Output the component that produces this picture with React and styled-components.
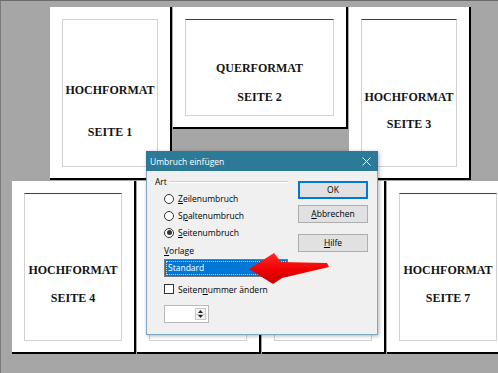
import React from 'react';
import styled, { createGlobalStyle } from 'styled-components';

const GlobalStyle = createGlobalStyle`
    html, body {
        margin: 0;
        padding: 0;
        background: #a6a6a6;
    }
    * {
        box-sizing: border-box;
    }
`;

const Canvas = styled.div`
    position: relative;
    width: 498px;
    height: 373px;
    overflow: hidden;
    background: #a6a6a6;
    border-top: 1px solid #6a6a6a;
    border-left: 1px solid #7a7a7a;
    padding-top: 6px;
`;

const PageRow = styled.div`
    display: flex;
    align-items: flex-start;
    gap: 1px;
    margin-left: ${p => p.$left}px;
    margin-top: ${p => p.$top || 0}px;
    width: max-content;
`;

const Page = styled.div`
    flex: none;
    width: ${p => p.$w}px;
    height: ${p => p.$h}px;
    background: #fff;
    border-right: 2px solid #000;
    border-bottom: 2px solid #000;
    padding: 12px 12px 11px 12px;
`;

const Margin = styled.div`
    height: 100%;
    border: 1px solid #d2d2d2;
    border-top-color: ${p => (p.$navy ? '#3a3a6a' : '#d2d2d2')};
    display: flex;
    flex-direction: column;
    align-items: center;
    padding-top: ${p => p.$pt}px;
    gap: ${p => p.$gap}px;
`;

const PageText = styled.div`
    font-family: 'Liberation Serif', 'Times New Roman', serif;
    font-weight: bold;
    font-size: 12px;
    line-height: 14px;
    color: #141414;
    white-space: nowrap;
`;

const Dialog = styled.div`
    position: absolute;
    left: 145px;
    top: 150px;
    width: 232px;
    height: 184px;
    background: #f0f0f0;
    border: 1px solid #7fa9c2;
    border-top: none;
    font-family: 'Open Sans', 'Segoe UI', sans-serif;
    font-size: 8.5px;
    color: #000;
    box-shadow: 1px 1px 4px rgba(0, 0, 0, 0.3);
`;

const TitleBar = styled.div`
    height: 20px;
    margin: 0 -1px;
    background: #2d7a98;
    color: #fff;
    display: flex;
    align-items: center;
    justify-content: space-between;
    padding: 0 7px 0 4px;
    font-size: 8.5px;
`;

const Body = styled.div`
    display: flex;
    padding: 4px 9px 0 8px;
`;

const LeftCol = styled.div`
    width: 133px;
    display: flex;
    flex-direction: column;
`;

const RightCol = styled.div`
    margin-left: 10px;
    padding-top: 6px;
    width: 70px;
    display: flex;
    flex-direction: column;
`;

const Legend = styled.div`
    height: 14px;
    display: flex;
    align-items: center;
    gap: 2px;
    line-height: 14px;
`;

const Rule = styled.div`
    flex: 1;
    height: 1px;
    background: #cfcfcf;
    border-bottom: 1px solid #fff;
    box-sizing: content-box;
`;

const OptionRow = styled.div`
    height: 17px;
    margin-left: 9px;
    display: flex;
    align-items: center;
    gap: 4px;
    margin-top: ${p => p.$mt || 0}px;
`;

const Radio = styled.span`
    flex: none;
    width: 10px;
    height: 10px;
    border-radius: 50%;
    border: 1px solid #333;
    background: #fff;
    display: flex;
    align-items: center;
    justify-content: center;
    &::after {
        content: '';
        width: 5px;
        height: 5px;
        border-radius: 50%;
        background: ${p => (p.$on ? '#333' : 'transparent')};
    }
`;

const Check = styled.span`
    flex: none;
    width: 10px;
    height: 10px;
    border: 1px solid #333;
    background: #fff;
`;

const Label = styled.div`
    margin-left: 9px;
    margin-top: ${p => p.$mt || 0}px;
    height: 14px;
    line-height: 14px;
`;

const Key = styled.span`
    text-decoration: underline;
    text-underline-offset: 1px;
`;

const Listbox = styled.div`
    margin-left: 9px;
    margin-top: 1px;
    width: 124px;
    height: 18px;
    border: 1px solid #7a7a7a;
    background: #0078d7;
    padding: 1px;
`;

const Selection = styled.div`
    height: 100%;
    border: 1px dotted #bcd8f2;
    color: #fff;
    line-height: 12px;
    padding-left: 1px;
`;

const CheckRow = styled.div`
    margin-left: 9px;
    margin-top: 5px;
    height: 14px;
    display: flex;
    align-items: center;
    gap: 4px;
`;

const Spin = styled.div`
    margin-left: 9px;
    margin-top: 9px;
    width: 45px;
    height: 18px;
    border: 1px solid #b8b8b8;
    background: #fff;
    display: flex;
    justify-content: flex-end;
    padding: 2px;
`;

const SpinButtons = styled.div`
    width: 11px;
    display: flex;
    flex-direction: column;
    border: 1px solid #c8c8c8;
    background: #f4f4f4;
`;

const SpinHalf = styled.div`
    flex: 1;
    display: flex;
    align-items: center;
    justify-content: center;
    & + & {
        border-top: 1px solid #c8c8c8;
    }
`;

const Button = styled.div`
    height: 18px;
    margin-top: ${p => p.$mt || 0}px;
    background: #e1e1e1;
    border: 1px solid ${p => (p.$default ? '#0078d7' : '#adadad')};
    box-shadow: ${p => (p.$default ? 'inset 0 0 0 1px #0078d7' : 'none')};
    display: flex;
    align-items: center;
    justify-content: center;
    line-height: 14px;
`;

const Arrow = styled.svg`
    position: absolute;
    left: 240px;
    top: 248px;
`;

const CloseIcon = () => (
    <svg width="9" height="9" viewBox="0 0 9 9">
        <path d="M0.5 0.5 L8.5 8.5 M8.5 0.5 L0.5 8.5" stroke="#fff" strokeWidth="1" />
    </svg>
);

// pages 5 and 6 sit fully behind the dialog, so only their frames show
const pages1 = [
    { w: 122, h: 173, navy: false, pt: 63, gap: 28, lines: ['HOCHFORMAT', 'SEITE 1'] },
    { w: 175, h: 122, navy: true, pt: 41, gap: 15, lines: ['QUERFORMAT', 'SEITE 2'] },
    { w: 122, h: 173, navy: true, pt: 70, gap: 13, lines: ['HOCHFORMAT', 'SEITE 3'] },
];

const pages2 = [
    { w: 124, h: 173, navy: true, pt: 69, gap: 14, lines: ['HOCHFORMAT', 'SEITE 4'] },
    { w: 124, h: 173, navy: true, pt: 69, gap: 14, lines: [] },
    { w: 124, h: 173, navy: true, pt: 69, gap: 14, lines: [] },
    { w: 124, h: 173, navy: true, pt: 69, gap: 14, lines: ['HOCHFORMAT', 'SEITE 7'] },
];

const renderPage = (pg, i) => (
    <Page key={i} $w={pg.w} $h={pg.h}>
        <Margin $navy={pg.navy} $pt={pg.pt} $gap={pg.gap}>
            {pg.lines.map(t => <PageText key={t}>{t}</PageText>)}
        </Margin>
    </Page>
);

export default function App() {
    return (
        <>
            <GlobalStyle />
            <Canvas>
                <PageRow $left={49}>{pages1.map(renderPage)}</PageRow>
                <PageRow $left={11} $top={1}>{pages2.map(renderPage)}</PageRow>

                <Dialog>
                    <TitleBar>
                        <span>Umbruch einfügen</span>
                        <CloseIcon />
                    </TitleBar>
                    <Body>
                        <LeftCol>
                            <Legend>
                                <span>Art</span>
                                <Rule />
                            </Legend>
                            <OptionRow $mt={1}>
                                <Radio />
                                <span><Key>Z</Key>eilenumbruch</span>
                            </OptionRow>
                            <OptionRow>
                                <Radio />
                                <span>S<Key>p</Key>altenumbruch</span>
                            </OptionRow>
                            <OptionRow>
                                <Radio $on />
                                <span><Key>S</Key>eitenumbruch</span>
                            </OptionRow>
                            <Label $mt={3}><Key>V</Key>orlage</Label>
                            <Listbox>
                                <Selection>Standard</Selection>
                            </Listbox>
                            <CheckRow>
                                <Check />
                                <span>Seiten<Key>n</Key>ummer ändern</span>
                            </CheckRow>
                            <Spin>
                                <SpinButtons>
                                    <SpinHalf>
                                        <svg width="5" height="3" viewBox="0 0 5 3"><path d="M0 3 L2.5 0 L5 3 Z" fill="#222" /></svg>
                                    </SpinHalf>
                                    <SpinHalf>
                                        <svg width="5" height="3" viewBox="0 0 5 3"><path d="M0 0 L2.5 3 L5 0 Z" fill="#222" /></svg>
                                    </SpinHalf>
                                </SpinButtons>
                            </Spin>
                        </LeftCol>
                        <RightCol>
                            <Button $default>OK</Button>
                            <Button $mt={6}><span><Key>A</Key>bbrechen</span></Button>
                            <Button $mt={11}><span><Key>H</Key>ilfe</span></Button>
                        </RightCol>
                    </Body>
                </Dialog>

                <Arrow width="92" height="40" viewBox="240 248 92 40">
                    <defs>
                        <linearGradient id="redfill" x1="0" y1="0" x2="0" y2="1">
                            <stop offset="0" stopColor="#ff2a2a" />
                            <stop offset="0.55" stopColor="#f00000" />
                            <stop offset="1" stopColor="#c80000" />
                        </linearGradient>
                    </defs>
                    <polygon
                        points="248,268 273,252 280,261 326,262 328,266 281,277 272,283"
                        fill="url(#redfill)"
                    />
                </Arrow>
            </Canvas>
        </>
    );
}
